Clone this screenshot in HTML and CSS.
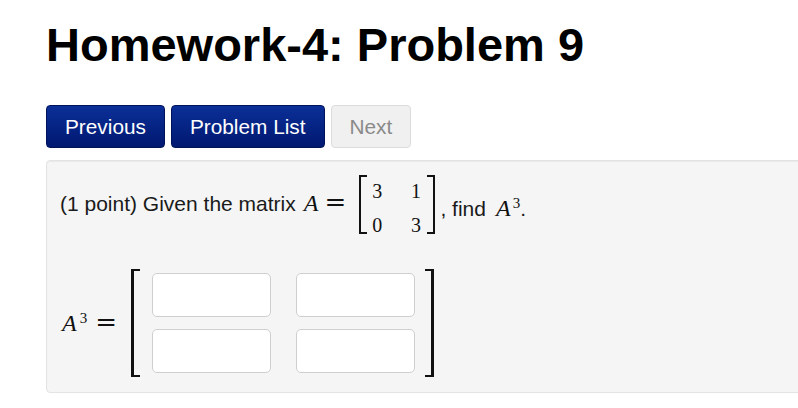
FILE: index.html
```html
<!DOCTYPE html>
<html lang="en">
<head>
    <meta charset="UTF-8">
    <title>Homework-4: Problem 9</title>
    <link rel="stylesheet" href="styles.css">
</head>
<body>
    <div class="page">
        <h1>Homework-4: Problem 9</h1>
        <div class="nav">
            <a class="btn btn-primary" href="#">Previous</a>
            <a class="btn btn-primary" href="#">Problem List</a>
            <span class="btn btn-disabled">Next</span>
        </div>
        <div class="well">
            <div class="line">
                (1 point) Given the matrix
                <span class="math"><i>A</i><span class="op">=</span></span>
                <span class="matrix">
                    <span class="bracket left"></span>
                    <span class="cells">
                        <span>3</span><span>1</span>
                        <span>0</span><span>3</span>
                    </span>
                    <span class="bracket right"></span>
                </span><span class="comma">, find <span class="math"><i>A</i><sup>3</sup></span>.</span>
            </div>
            <div class="answer">
                <span class="math label"><i>A</i><sup>3</sup><span class="op">=</span></span>
                <span class="big-matrix">
                    <span class="big-bracket left"></span>
                    <span class="inputs">
                        <input type="text" class="entry">
                        <input type="text" class="entry">
                        <input type="text" class="entry">
                        <input type="text" class="entry">
                    </span>
                    <span class="big-bracket right"></span>
                </span>
            </div>
        </div>
    </div>
</body>
</html>
```

FILE: styles.css
```css
html, body {
    margin: 0;
    overflow: hidden;
    background: #fff;
}
.page {
    padding-left: 46px;
    font-family: "Liberation Sans", Arial, sans-serif;
    color: #1a1a1a;
}
h1 {
    margin: 18px 0 0 0;
    font-size: 47px;
    line-height: 54px;
    font-weight: bold;
    color: #000;
}
.nav {
    display: flex;
    gap: 6px;
    margin-top: 33px;
}
.btn {
    display: inline-block;
    font-size: 20.8px;
    line-height: 23px;
    padding: 9px 18px;
    border: 1px solid transparent;
    border-radius: 4px;
    text-decoration: none;
}
.btn-primary {
    color: #fff;
    background: linear-gradient(to bottom, #0b2f98, #001870);
    border-color: #00135a;
}
.btn-disabled {
    color: #8a8a8a;
    background: #f0f0f0;
    border-color: #dcdcdc;
}
.well {
    margin-top: 12px;
    width: 800px;
    background: #f5f5f5;
    border: 1px solid #e3e3e3;
    border-radius: 4px;
    box-shadow: inset 0 1px 1px rgba(0, 0, 0, 0.05);
    padding: 12px 13px 15px 13px;
    font-size: 21px;
}
.line {
    display: flex;
    align-items: center;
    white-space: nowrap;
}
.math {
    display: inline-flex;
    align-items: baseline;
    font-family: "Liberation Serif", "Times New Roman", serif;
    font-size: 24px;
    margin-left: 8px;
    color: #111;
}
.math i {
    font-style: italic;
}
.math sup {
    font-size: 15px;
    font-style: normal;
    position: relative;
    top: -8px;
    line-height: 0;
    margin-left: 2px;
}
.op {
    font-family: "DejaVu Serif", serif;
    font-size: 26px;
    line-height: 24px;
    margin-left: 6px;
}
.matrix {
    display: inline-flex;
    align-items: stretch;
    margin-left: 13px;
    height: 59px;
    margin-top: 2px;
}
.bracket {
    width: 6px;
    border-top: 2px solid #111;
    border-bottom: 2px solid #111;
}
.bracket.left {
    border-left: 2px solid #111;
}
.bracket.right {
    border-right: 2px solid #111;
}
.cells {
    display: grid;
    grid-template-columns: 20px 20px;
    grid-auto-rows: 24px;
    column-gap: 18.7px;
    row-gap: 10.5px;
    padding: 3.5px 1.5px 0 0;
    font-family: "Liberation Serif", "Times New Roman", serif;
    font-size: 20px;
    line-height: 24px;
    text-align: center;
    color: #111;
}
.comma {
    display: inline-flex;
    align-items: baseline;
    margin-left: 5px;
    margin-top: 10px;
}
.comma .math {
    margin-left: 10px;
}
.answer {
    display: flex;
    align-items: center;
    margin-top: 35px;
}
.label {
    margin-left: 2px;
}
.label sup {
    margin-left: 3px;
}
.label .op {
    margin-left: 8px;
}
.big-matrix {
    display: inline-flex;
    margin-left: 14px;
    height: 108px;
}
.big-bracket {
    width: 6px;
    border-top: 2.5px solid #111;
    border-bottom: 2.5px solid #111;
}
.big-bracket.left {
    border-left: 3px solid #111;
}
.big-bracket.right {
    border-right: 3px solid #111;
}
.inputs {
    display: grid;
    grid-template-columns: 119px 119px;
    grid-auto-rows: 44px;
    column-gap: 25px;
    row-gap: 12px;
    padding: 4px 10px 0 12px;
}
.entry {
    box-sizing: border-box;
    width: 119px;
    height: 44px;
    margin: 0;
    background: #fff;
    border: 1px solid #cfcfcf;
    border-radius: 5px;
}
```
